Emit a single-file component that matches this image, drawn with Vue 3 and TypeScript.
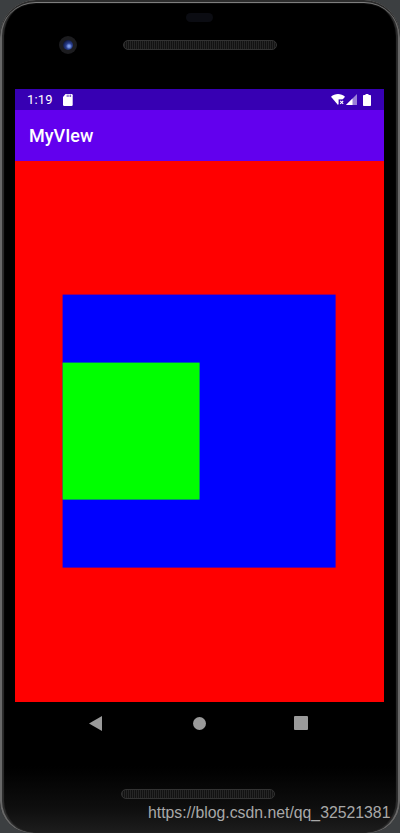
<script setup lang="ts">
const title: string = 'MyVIew'
</script>

<template>
  <div class="stage">
    <div class="phone">
      <div class="bezel-top">
        <div class="pill"></div>
        <div class="hardware">
          <div class="camera"><div class="lens"></div></div>
          <div class="speaker"></div>
        </div>
      </div>
      <div class="screen">
        <div class="status">
          <span class="time">1:19</span>
          <svg class="sd" viewBox="0 0 10 12"><path d="M2.500 0H8.500A1.200 1.200 0 0 1 9.700 1.200V10.800A1.200 1.200 0 0 1 8.500 12H1.200A1.200 1.200 0 0 1 0 10.800V3Z" fill="#fff"/><path d="M4.200 .6V3M5.900 .6V3M7.600 .6V3" stroke="#3700b3" stroke-width=".7"/></svg>
          <span class="spacer"></span>
          <svg class="wifi" viewBox="0 0 14 11"><path d="M0 2.800C3.800-.9 10.200-.9 14 2.800L7 11Z" fill="#fff"/><rect x="7.600" y="5.400" width="6.400" height="5.600" fill="#3700b3"/><path d="M9.200 6.900L12.200 9.900M12.200 6.900L9.200 9.900" stroke="#fff" stroke-width="1.100"/></svg>
          <svg class="signal" viewBox="0 0 11 11"><path d="M0 11L11 0V11Z" fill="#9a80d8"/><path d="M0 11L6.500 4.500V11Z" fill="#fff"/></svg>
          <svg class="battery" viewBox="0 0 8 12"><path d="M2.500 0H5.500V1H7.200A.8.8 0 0 1 8 1.800V11.200A.8.8 0 0 1 7.200 12H.8A.8.8 0 0 1 0 11.200V1.800A.8.8 0 0 1 .8 1H2.500Z" fill="#fff"/></svg>
        </div>
        <div class="appbar">{{ title }}</div>
        <div class="content">
          <div class="blue"><div class="green"></div></div>
        </div>
      </div>
      <div class="nav">
        <svg class="nav-back" viewBox="0 0 13 15"><path d="M13 0V15L0 7.500Z" fill="#9a9a9a"/></svg>
        <div class="nav-home"></div>
        <div class="nav-recent"></div>
      </div>
      <div class="speaker bottom"></div>
    </div>
    <div class="watermark">https://blog.csdn.net/qq_32521381</div>
  </div>
</template>

<style>
html, body { margin: 0; background: #3c3f41; }
</style>

<style scoped>
.stage {
  position: relative;
  width: 400px;
  height: 833px;
  overflow: hidden;
  background: #3c3f41;
  font-family: Roboto, "Liberation Sans", sans-serif;
}
.phone {
  box-sizing: border-box;
  width: 400px;
  height: 833px;
  padding: 0 15px;
  display: flex;
  flex-direction: column;
  border-radius: 36px 36px 32px 32px;
  background: linear-gradient(#000 92%, #0e0e0e 97%, #1d1d1d);
  box-shadow:
    inset 0 2px 0 #2c2c2c,
    inset 0 4px 1px -1px #8c8c8c,
    inset 2px 0 0 #686868,
    inset -2px 0 0 #686868,
    inset 4px 0 1px #2e2e2e,
    inset -4px 0 1px #2e2e2e;
}
.bezel-top {
  height: 89px;
  flex: none;
  display: flex;
  flex-direction: column;
  align-items: center;
  position: relative;
}
.pill {
  width: 27px;
  height: 9px;
  margin-top: 13px;
  margin-left: -1px;
  border-radius: 5px;
  background: #0b0c12;
}
.hardware {
  position: absolute;
  left: 44px;
  top: 36px;
  display: flex;
  align-items: center;
  gap: 46px;
}
.camera {
  width: 18px;
  height: 18px;
  border-radius: 50%;
  background: #1c1c1f;
  display: flex;
  align-items: center;
  justify-content: center;
}
.lens {
  width: 10px;
  height: 10px;
  border-radius: 50%;
  background: radial-gradient(circle at 60% 62%, #7d9be8 0 12%, #2a3f8f 35%, #0a1030 80%);
}
.speaker {
  width: 152px;
  height: 8px;
  flex: none;
  border-radius: 5px;
  border: 1px solid #333;
  background: repeating-linear-gradient(90deg, #262626 0 1px, #121212 1px 2px);
}
.speaker.bottom {
  align-self: center;
  margin-top: 45px;
  margin-left: -5px;
}
.screen {
  width: 369px;
  display: flex;
  flex-direction: column;
  flex: none;
}
.status {
  height: 21px;
  box-sizing: border-box;
  padding: 0 13px 0 12px;
  background: #3700b3;
  display: flex;
  align-items: center;
  color: #fff;
}
.time {
  font-size: 13px;
  letter-spacing: .2px;
  width: 36px;
}
.sd { width: 10px; height: 12px; }
.spacer { flex: 1; }
.wifi { width: 14px; height: 11px; }
.signal { width: 11px; height: 11px; margin-left: 1px; }
.battery { width: 8px; height: 12px; margin-left: 6px; }
.appbar {
  height: 51px;
  box-sizing: border-box;
  padding: 0 14px;
  background: #6200ee;
  color: #fff;
  display: flex;
  align-items: center;
  font-size: 18px;
  font-weight: 500;
}
.content {
  height: 541px;
  box-sizing: border-box;
  background: #f00;
  display: flex;
  align-items: center;
  justify-content: center;
}
.blue {
  width: 273px;
  height: 273px;
  margin-right: 1px;
  transform: translate(-.4px, -.4px);
  background: #00f;
  display: flex;
  align-items: center;
}
.green {
  width: 137px;
  height: 137px;
  background: #0f0;
}
.nav {
  height: 42px;
  flex: none;
  display: flex;
  align-items: center;
  padding-left: 74px;
}
.nav-back { width: 13px; height: 15px; }
.nav-home {
  width: 13px;
  height: 13px;
  margin-left: 91px;
  border-radius: 50%;
  background: #9a9a9a;
}
.nav-recent {
  width: 14px;
  height: 14px;
  margin-left: 88px;
  border-radius: 1px;
  background: #9a9a9a;
}
.watermark {
  position: absolute;
  left: 148px;
  top: 803px;
  font-family: "Liberation Sans", Arial, sans-serif;
  font-size: 15.800px;
  line-height: 20px;
  color: #a8a8a8;
  white-space: nowrap;
}
</style>
